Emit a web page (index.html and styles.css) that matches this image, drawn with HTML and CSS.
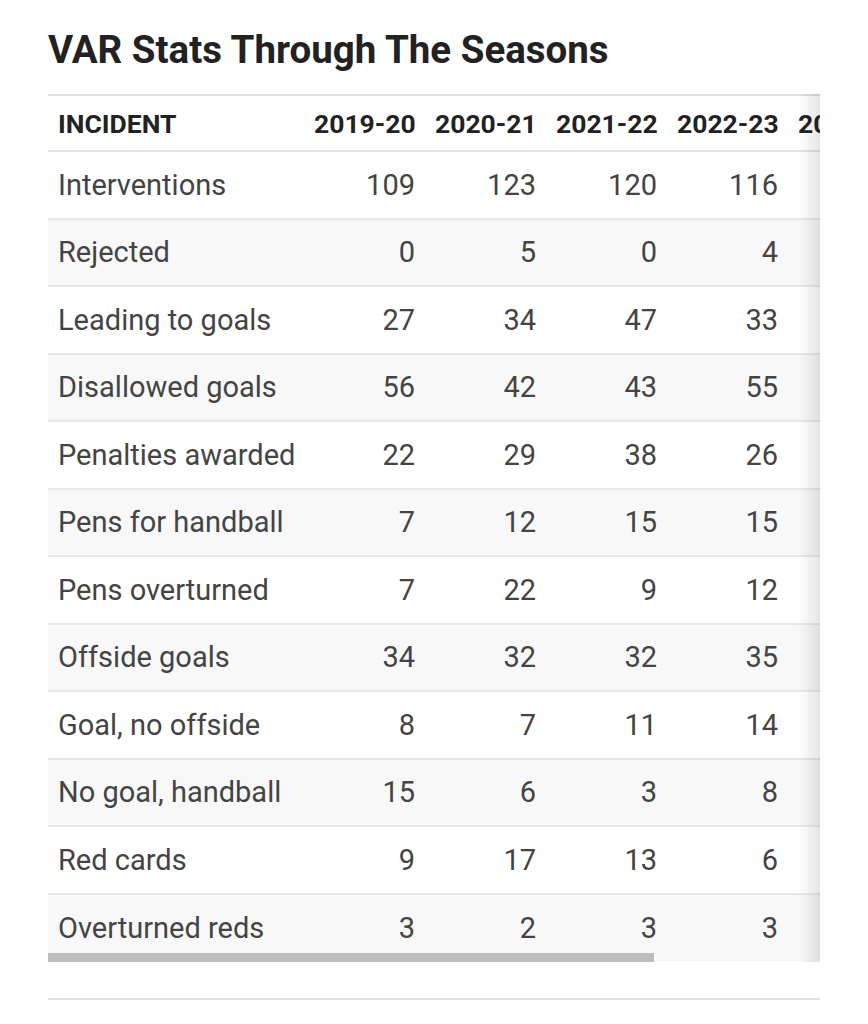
FILE: index.html
```html
<!DOCTYPE html>
<html lang="en">
<head>
<meta charset="utf-8">
<title>VAR Stats Through The Seasons</title>
<link rel="stylesheet" href="styles.css">
</head>
<body>
<main class="page">
  <h2 class="title">VAR Stats Through The Seasons</h2>
  <div class="scroller">
    <div class="scroll-inner">
      <table class="stats">
        <colgroup>
          <col class="c-inc"><col class="c-num"><col class="c-num"><col class="c-num"><col class="c-num"><col class="c-num"><col class="c-num">
        </colgroup>
        <thead>
          <tr><th class="inc">INCIDENT</th><th>2019-20</th><th>2020-21</th><th>2021-22</th><th>2022-23</th><th>2023-24</th><th>2024-25</th></tr>
        </thead>
        <tbody>
          <tr><td class="inc">Interventions</td><td>109</td><td>123</td><td>120</td><td>116</td><td>113</td><td>98</td></tr>
          <tr><td class="inc">Rejected</td><td>0</td><td>5</td><td>0</td><td>4</td><td>2</td><td>1</td></tr>
          <tr><td class="inc">Leading to goals</td><td>27</td><td>34</td><td>47</td><td>33</td><td>30</td><td>28</td></tr>
          <tr><td class="inc">Disallowed goals</td><td>56</td><td>42</td><td>43</td><td>55</td><td>49</td><td>40</td></tr>
          <tr><td class="inc">Penalties awarded</td><td>22</td><td>29</td><td>38</td><td>26</td><td>34</td><td>25</td></tr>
          <tr><td class="inc">Pens for handball</td><td>7</td><td>12</td><td>15</td><td>15</td><td>11</td><td>9</td></tr>
          <tr><td class="inc">Pens overturned</td><td>7</td><td>22</td><td>9</td><td>12</td><td>10</td><td>8</td></tr>
          <tr><td class="inc">Offside goals</td><td>34</td><td>32</td><td>32</td><td>35</td><td>28</td><td>24</td></tr>
          <tr><td class="inc">Goal, no offside</td><td>8</td><td>7</td><td>11</td><td>14</td><td>9</td><td>6</td></tr>
          <tr><td class="inc">No goal, handball</td><td>15</td><td>6</td><td>3</td><td>8</td><td>5</td><td>4</td></tr>
          <tr><td class="inc">Red cards</td><td>9</td><td>17</td><td>13</td><td>6</td><td>7</td><td>5</td></tr>
          <tr><td class="inc">Overturned reds</td><td>3</td><td>2</td><td>3</td><td>3</td><td>2</td><td>2</td></tr>
        </tbody>
      </table>
    </div>
    <div class="shade"></div>
    <div class="thumb"></div>
  </div>
  <hr class="rule">
</main>
</body>
</html>
```
FILE: styles.css
```css
html, body {
  margin: 0;
  padding: 0;
  background: #fff;
}
body {
  font-family: Roboto, "Liberation Sans", Arial, sans-serif;
  color: #444;
}
.page {
  width: 772px;
  margin-left: 48px;
  padding-top: 27px;
}
.title {
  margin: 0 0 21px 0;
  font-size: 38.5px;
  line-height: 46px;
  font-weight: 700;
  color: #222;
}
.scroller {
  position: relative;
  width: 772px;
  height: 868px;
  overflow: hidden;
}
.scroll-inner {
  width: 772px;
  overflow: hidden;
}
.stats {
  table-layout: fixed;
  width: 982px;
  border-collapse: collapse;
  border-spacing: 0;
}
.c-inc { width: 256px; }
.c-num { width: 121px; }
.stats th, .stats td {
  padding: 0 10px;
  text-align: right;
  vertical-align: middle;
  white-space: nowrap;
}
.stats th.inc, .stats td.inc {
  text-align: left;
  padding-left: 10px;
}
.stats thead tr {
  border-top: 2px solid #e0e0e0;
  border-bottom: 2px solid #e3e3e3;
}
.stats th {
  height: 54px;
  font-size: 26.5px;
  font-weight: 700;
  color: #222;
}
.stats tbody tr {
  border-bottom: 2px solid #e8e8e8;
}
.stats tbody tr:last-child {
  border-bottom: 0;
}
.stats td {
  height: 65.5px;
  font-size: 29px;
  color: #444;
}
.stats tbody tr:last-child td {
  height: 67.5px;
}
.stats tbody tr:nth-child(even) {
  background: #f8f8f8;
}
.shade {
  position: absolute;
  top: 0;
  right: 0;
  width: 22px;
  height: 100%;
  background: linear-gradient(to right, rgba(0,0,0,0), rgba(0,0,0,0.1));
  pointer-events: none;
}
.thumb {
  position: absolute;
  left: 0;
  bottom: 0;
  width: 606px;
  height: 9px;
  background: #bdbdbd;
}
.rule {
  margin: 36px 0 0 0;
  border: 0;
  height: 2px;
  background: #e0e0e0;
}
```
